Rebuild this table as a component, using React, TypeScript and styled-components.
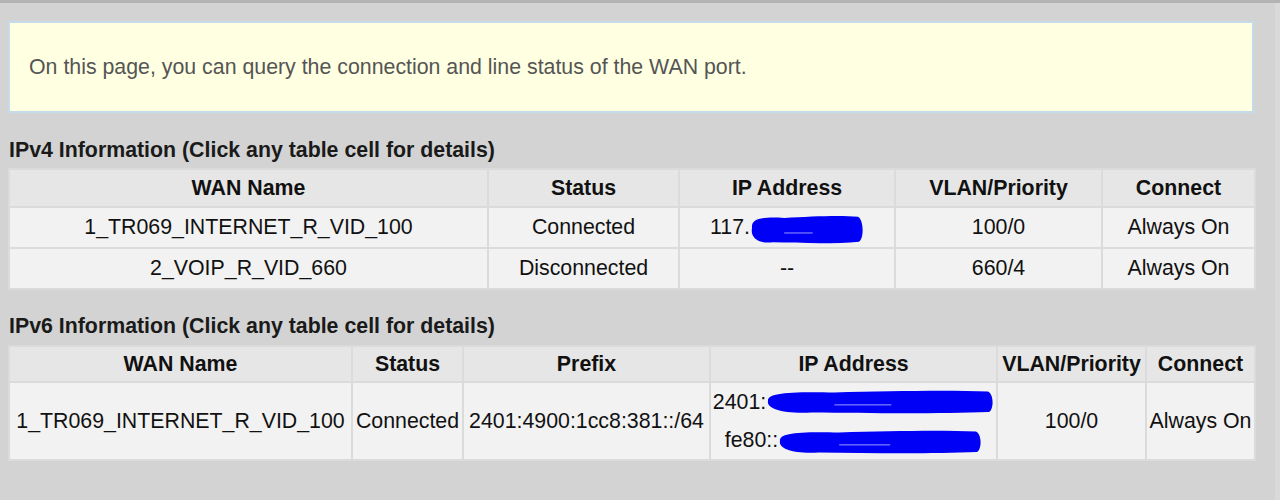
import React from "react";
import styled, { createGlobalStyle } from "styled-components";

const Global = createGlobalStyle`
  html, body { margin: 0; padding: 0; background: #d3d3d3; }
  body { font-family: "Liberation Sans", Arial, sans-serif; }
`;

const Page = styled.div`
  width: 1280px;
  height: 500px;
  display: flex;
  background: #d3d3d3;
  border-top: 3px solid #b3b3b3;
  box-sizing: border-box;
  overflow: hidden;
`;

const Main = styled.div`
  width: 1275px;
  padding: 0 0 0 8px;
  box-sizing: border-box;
`;

const Edge = styled.div`
  width: 5px;
  background: #d9d9d9;
`;

const Content = styled.div`
  width: 1246px;
`;

const Notice = styled.div`
  margin-top: 18px;
  height: 92px;
  box-sizing: border-box;
  border: 2px solid #c4dcea;
  background: #ffffe1;
  padding: 0 19px;
  display: flex;
  align-items: center;
  font-size: 21.33px;
  color: #555;
`;

const Heading = styled.div<{ $top: number }>`
  margin-top: ${(p) => p.$top}px;
  margin-left: 1px;
  height: 24px;
  line-height: 24px;
  font-size: 21.33px;
  font-weight: bold;
  color: #1a1a1a;
`;

const Table = styled.table<{ $top: number }>`
  margin-top: ${(p) => p.$top}px;
  width: 1246px;
  table-layout: fixed;
  border-collapse: collapse;
  font-size: 21.33px;
  color: #111;
`;

const Th = styled.th<{ $h: number }>`
  height: ${(p) => p.$h}px;
  padding: 0;
  background: #e6e6e6;
  border: 2px solid #dbdbdb;
  font-weight: bold;
  text-align: center;
  color: #111;
  white-space: nowrap;
`;

const Td = styled.td<{ $h: number }>`
  height: ${(p) => p.$h}px;
  padding: 0;
  background: #f2f2f2;
  border: 2px solid #dbdbdb;
  text-align: center;
  white-space: nowrap;
`;

const Redacted = styled.span`
  display: inline-flex;
  align-items: center;
  vertical-align: middle;
`;

const AddrLine = styled.div`
  display: flex;
  justify-content: center;
  align-items: center;
  height: 38px;
`;

const Blob = ({ w, h, dy = 0 }: { w: number; h: number; dy?: number }) => (
  <svg
    width={w}
    height={h}
    viewBox={`0 0 ${w} ${h}`}
    style={{ display: "block", marginTop: dy }}
  >
    <path
      d={`M2 ${h * 0.45} C1 ${h * 0.12} ${w * 0.1} ${h * 0.06} ${w * 0.3} ${h * 0.1}
          C${w * 0.55} ${h * 0.04} ${w * 0.8} ${h * 0.0} ${w - 6} ${h * 0.06}
          C${w} ${h * 0.18} ${w} ${h * 0.82} ${w - 5} ${h * 0.92}
          C${w * 0.75} ${h} ${w * 0.45} ${h * 0.97} ${w * 0.2} ${h * 0.94}
          C${w * 0.08} ${h} 0 ${h * 0.8} 2 ${h * 0.45} Z`}
      fill="#0000f6"
    />
    <path
      d={`M${w * 0.3} ${h * 0.62} L${w * 0.55} ${h * 0.62}`}
      stroke="#9a9aff"
      strokeWidth="1"
    />
  </svg>
);

const ipv4Rows = [
  { name: "1_TR069_INTERNET_R_VID_100", status: "Connected", ip: "117.", blob: true, vlan: "100/0", connect: "Always On" },
  { name: "2_VOIP_R_VID_660", status: "Disconnected", ip: "--", blob: false, vlan: "660/4", connect: "Always On" },
];

export default function App() {
  return (
    <>
      <Global />
      <Page>
        <Main>
          <Content>
            <Notice>On this page, you can query the connection and line status of the WAN port.</Notice>

            <Heading $top={25}>IPv4 Information (Click any table cell for details)</Heading>
            <Table $top={6}>
              <colgroup>
                <col style={{ width: 479 }} />
                <col style={{ width: 191 }} />
                <col style={{ width: 216 }} />
                <col style={{ width: 207 }} />
                <col style={{ width: 153 }} />
              </colgroup>
              <thead>
                <tr>
                  <Th $h={36}>WAN Name</Th>
                  <Th $h={36}>Status</Th>
                  <Th $h={36}>IP Address</Th>
                  <Th $h={36}>VLAN/Priority</Th>
                  <Th $h={36}>Connect</Th>
                </tr>
              </thead>
              <tbody>
                {ipv4Rows.map((r) => (
                  <tr key={r.name}>
                    <Td $h={39}>{r.name}</Td>
                    <Td $h={39}>{r.status}</Td>
                    <Td $h={39}>
                      {r.blob ? (
                        <Redacted>
                          {r.ip}
                          <Blob w={114} h={29} dy={3} />
                        </Redacted>
                      ) : (
                        r.ip
                      )}
                    </Td>
                    <Td $h={39}>{r.vlan}</Td>
                    <Td $h={39}>{r.connect}</Td>
                  </tr>
                ))}
              </tbody>
            </Table>

            <Heading $top={24}>IPv6 Information (Click any table cell for details)</Heading>
            <Table $top={7}>
              <colgroup>
                <col style={{ width: 343 }} />
                <col style={{ width: 111 }} />
                <col style={{ width: 247 }} />
                <col style={{ width: 287 }} />
                <col style={{ width: 149 }} />
                <col style={{ width: 109 }} />
              </colgroup>
              <thead>
                <tr>
                  <Th $h={34}>WAN Name</Th>
                  <Th $h={34}>Status</Th>
                  <Th $h={34}>Prefix</Th>
                  <Th $h={34}>IP Address</Th>
                  <Th $h={34}>VLAN/Priority</Th>
                  <Th $h={34}>Connect</Th>
                </tr>
              </thead>
              <tbody>
                <tr>
                  <Td $h={75}>1_TR069_INTERNET_R_VID_100</Td>
                  <Td $h={75}>Connected</Td>
                  <Td $h={75}>2401:4900:1cc8:381::/64</Td>
                  <Td $h={75}>
                    <AddrLine>
                      2401:
                      <Blob w={228} h={24} dy={0} />
                    </AddrLine>
                    <AddrLine>
                      fe80::
                      <Blob w={204} h={24} dy={4} />
                    </AddrLine>
                  </Td>
                  <Td $h={75}>100/0</Td>
                  <Td $h={75}>Always On</Td>
                </tr>
              </tbody>
            </Table>
          </Content>
        </Main>
        <Edge />
      </Page>
    </>
  );
}
